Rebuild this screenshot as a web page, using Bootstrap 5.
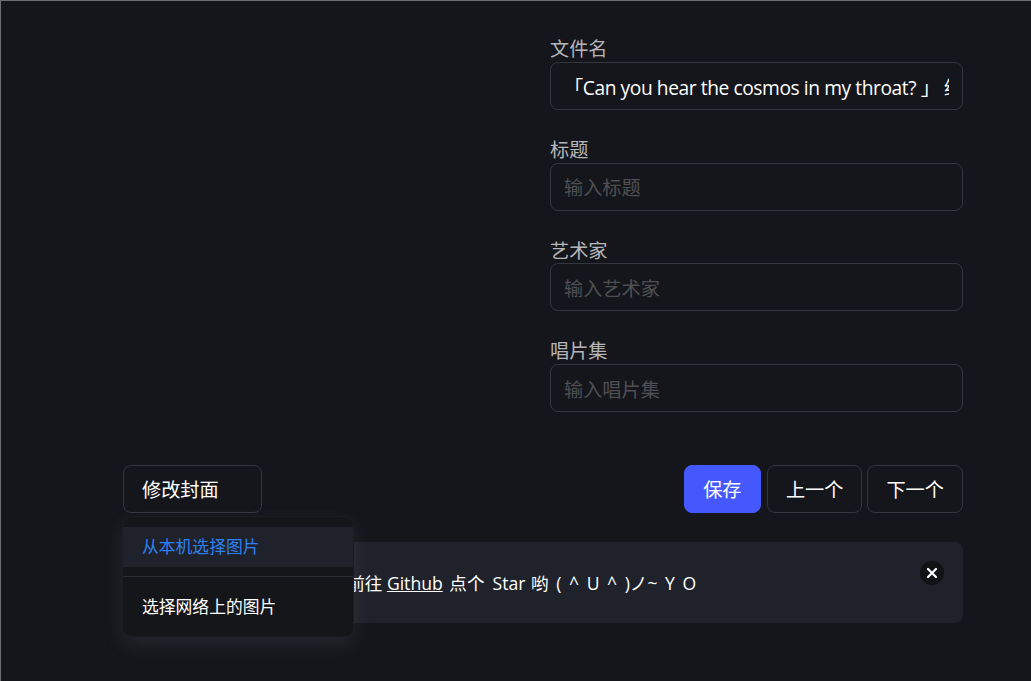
<!DOCTYPE html>
<html lang="zh-CN">
<head>
<meta charset="utf-8">
<title>编辑</title>
<link rel="stylesheet" href="https://cdn.jsdelivr.net/npm/bootstrap@5.3.0/dist/css/bootstrap.min.css">
<style>
html,body{height:100%;}
body{background:#15161b;color:#fff;font-family:"Open Sans","Noto Sans CJK SC",sans-serif;font-size:19.2px;border-top:1px solid #6e6e70;border-left:1px solid #6e6e70;overflow:hidden;}
.shell{padding:32px 68px 0 122px;}
.fields{width:413px;}
.fields .form-label{display:block;color:#b6b6ba;margin:0;font-size:19.2px;line-height:31px;height:28.8px;}
.fields .form-control{height:48px;background:transparent;border:1px solid #34353f;border-radius:8px;color:#fff;font-family:inherit;font-size:19.2px;padding:2px 13px 0;box-shadow:none;letter-spacing:-.42px;}
.fields .form-control::placeholder{color:#4f4f53;opacity:1;letter-spacing:0;}
.actions{margin-top:53px;height:48px;}
.ghost,.solid{height:48px;border-radius:8px;font-size:19.2px;color:#fff;padding:0 18px;line-height:48px;}
.ghost{background:transparent;border:1px solid #34353f;}
.ghost.cover{width:139px;text-align:left;}
.solid{background:#4458fe;border:1px solid #4458fe;width:77px;margin-right:1px;}
.btn-gap{gap:5px;}
.cover-menu{display:block;position:absolute;left:-1px;top:51px;width:232px;margin:0;padding:10px 0 9px;background:#15161a;border:1px solid #1c1d23;border-radius:10px;box-shadow:0 8px 20px rgba(150,150,160,.14);z-index:5;}
.cover-menu .dropdown-item{height:40px;line-height:40px;padding:0 19px;font-size:16.8px;color:#fff;}
.cover-menu .dropdown-item.picked{background:#1f222a;color:#2e80f2;}
.cover-menu .dropdown-divider{margin:9px 0 10px;border-top:1px solid #2c2d34;opacity:1;}
.tip{margin:29px 0 0;height:81px;background:#1f222a;border:0;border-radius:8px;color:#fff;font-size:17.6px;padding:2px 0 0 13px;display:flex;align-items:center;}
.tip a{color:#fff;margin-right:2px;}
.tip-star{margin:0 1px 0 3.5px;}
.tip-yo{margin-right:3px;}
.kaomoji{word-spacing:3px;}
.tip-close{position:absolute;top:19px;right:19px;width:24px;height:24px;border:0;border-radius:50%;background:#111214;padding:0;display:flex;align-items:center;justify-content:center;}
</style>
</head>
<body>
<div class="shell">
  <div class="d-flex justify-content-end">
    <form class="fields">
      <div class="mb-4">
        <label class="form-label" for="f1">文件名</label>
        <input id="f1" class="form-control" type="text" value="「Can you hear the cosmos in my throat? 」 终">
      </div>
      <div class="mb-4">
        <label class="form-label" for="f2">标题</label>
        <input id="f2" class="form-control" type="text" placeholder="输入标题">
      </div>
      <div class="mb-4">
        <label class="form-label" for="f3">艺术家</label>
        <input id="f3" class="form-control" type="text" placeholder="输入艺术家">
      </div>
      <div>
        <label class="form-label" for="f4">唱片集</label>
        <input id="f4" class="form-control" type="text" placeholder="输入唱片集">
      </div>
    </form>
  </div>
  <div class="actions d-flex justify-content-between position-relative">
    <div>
      <button class="btn ghost cover" type="button">修改封面</button>
      <div class="dropdown-menu cover-menu">
        <a class="dropdown-item picked" href="#">从本机选择图片</a>
        <hr class="dropdown-divider">
        <a class="dropdown-item" href="#">选择网络上的图片</a>
      </div>
    </div>
    <div class="d-flex btn-gap">
      <button class="btn solid" type="button">保存</button>
      <button class="btn ghost" type="button">上一个</button>
      <button class="btn ghost" type="button">下一个</button>
    </div>
  </div>
  <div class="alert tip position-relative">
    <span>如果你喜欢这个应用，欢迎前往 <a href="#">Github</a> 点个 <span class="tip-star">Star</span> <span class="tip-yo">哟</span> <span class="kaomoji">( ^ U ^ )ノ~ Y O</span></span>
    <button class="tip-close" type="button" aria-label="关闭">
      <svg width="12" height="12" viewBox="0 0 12 12"><path d="M2 2L10 10M10 2L2 10" stroke="#fff" stroke-width="2.2" stroke-linecap="round"/></svg>
    </button>
  </div>
</div>
</body>
</html>
